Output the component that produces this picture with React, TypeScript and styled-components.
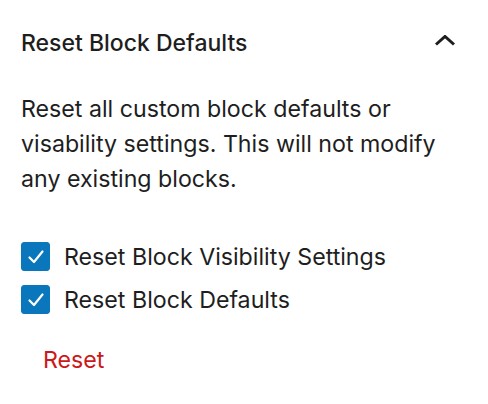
import React from "react";
import styled, { createGlobalStyle } from "styled-components";

const Global = createGlobalStyle`
  html, body { margin: 0; padding: 0; background: #fff; }
  body { font-family: Inter, "Noto Sans", sans-serif; color: #1e1e1e; -webkit-font-smoothing: antialiased; }
`;

const Panel = styled.section`
  width: 488px;
  height: 404px;
  box-sizing: border-box;
  padding: 0 21px;
  display: flex;
  flex-direction: column;
`;

const Header = styled.div`
  height: 86px;
  display: flex;
  align-items: center;
  justify-content: space-between;
`;

const Title = styled.h2`
  margin: 0;
  font-size: 23px;
  font-weight: 500;
  line-height: 30px;
  color: #1e1e1e;
`;

const Toggle = styled.button`
  border: 0;
  background: none;
  padding: 0;
  margin: 0 10px 6px 0;
  width: 24px;
  height: 24px;
  display: flex;
  align-items: center;
  justify-content: center;
  color: #1e1e1e;
`;

const Description = styled.p`
  margin: 6px 0 0;
  font-size: 23.2px;
  line-height: 35px;
  color: #1e1e1e;
`;

const Options = styled.div`
  margin-top: 38px;
  display: flex;
  flex-direction: column;
`;

const Row = styled.label`
  height: 43px;
  display: flex;
  align-items: center;
  gap: 14px;
  font-size: 23.2px;
  color: #1e1e1e;
`;

const Box = styled.span<{ $checked: boolean }>`
  width: 29px;
  height: 29px;
  box-sizing: border-box;
  border-radius: 3px;
  background: ${(p) => (p.$checked ? "#0a77bd" : "#fff")};
  border: 1px solid ${(p) => (p.$checked ? "#0a77bd" : "#1e1e1e")};
  display: flex;
  align-items: center;
  justify-content: center;
  flex-shrink: 0;
`;

const ResetButton = styled.button`
  align-self: flex-start;
  margin-top: 10px;
  height: 58px;
  padding: 0 22px;
  border: 0;
  background: none;
  font-family: inherit;
  font-size: 23.2px;
  line-height: 58px;
  color: #cc1818;
`;

const Check = () => (
  <svg width="18" height="18" viewBox="0 0 18 18" fill="none">
    <polyline points="2.5,9.5 7,14 15.5,3.5" stroke="#fff" strokeWidth="2.2" strokeLinecap="round" strokeLinejoin="round" />
  </svg>
);

const Option = ({ label }: { label: string }) => (
  <Row>
    <Box $checked>
      <Check />
    </Box>
    {label}
  </Row>
);

export default function App() {
  return (
    <>
      <Global />
      <Panel>
        <Header>
          <Title>Reset Block Defaults</Title>
          <Toggle aria-label="Collapse">
            <svg width="20" height="11" viewBox="0 0 20 11" fill="none">
              <polyline points="1,9.5 10,1.5 19,9.5" stroke="#1e1e1e" strokeWidth="3" />
            </svg>
          </Toggle>
        </Header>
        <Description>
          Reset all custom block defaults or visability settings. This will not modify any existing blocks.
        </Description>
        <Options>
          <Option label="Reset Block Visibility Settings" />
          <Option label="Reset Block Defaults" />
        </Options>
        <ResetButton>Reset</ResetButton>
      </Panel>
    </>
  );
}
